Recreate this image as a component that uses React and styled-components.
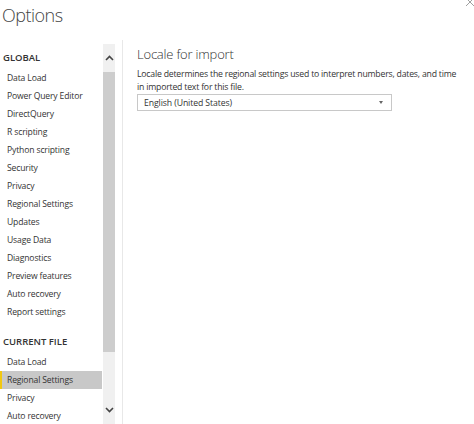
import React from 'react';
import styled, { createGlobalStyle } from 'styled-components';

const GlobalStyle = createGlobalStyle`
  html, body {
    margin: 0;
    padding: 0;
    background: #ffffff;
  }
  body {
    font-family: 'Open Sans', 'Noto Sans', sans-serif;
    color: #333333;
  }
`;

const globalItems = [
    'Data Load',
    'Power Query Editor',
    'DirectQuery',
    'R scripting',
    'Python scripting',
    'Security',
    'Privacy',
    'Regional Settings',
    'Updates',
    'Usage Data',
    'Diagnostics',
    'Preview features',
    'Auto recovery',
    'Report settings',
];

const fileItems = ['Data Load', 'Regional Settings', 'Privacy', 'Auto recovery'];

function Chevron({ up }) {
    return (
        <svg width="9" height="6" viewBox="0 0 9 6">
            <path
                d={up ? 'M1 5 L4.5 1.5 L8 5' : 'M1 1 L4.5 4.5 L8 1'}
                fill="none"
                stroke="#444"
                strokeWidth="1.6"
            />
        </svg>
    );
}

// only the lower half of the close glyph is inside the frame
function CloseMark() {
    return (
        <svg width="10" height="7" viewBox="0 0 10 7">
            <path d="M1 6 L7 0 M3 0 L9 6" stroke="#a0a0a0" strokeWidth="1" fill="none" />
        </svg>
    );
}

function App() {
    return (
        <StyledWindow>
            <GlobalStyle />
            <StyledTitleBar>
                <StyledTitle>Options</StyledTitle>
                <StyledClose>
                    <CloseMark />
                </StyledClose>
            </StyledTitleBar>
            <StyledBody>
                <StyledNav>
                    <StyledSection>GLOBAL</StyledSection>
                    {globalItems.map((item) => (
                        <StyledItem key={`g-${item}`}>{item}</StyledItem>
                    ))}
                    <StyledSection spaced>CURRENT FILE</StyledSection>
                    {fileItems.map((item) => (
                        <StyledItem
                            key={`f-${item}`}
                            current={item === 'Regional Settings'}
                        >
                            {item}
                        </StyledItem>
                    ))}
                </StyledNav>
                <StyledScrollbar>
                    <StyledArrow>
                        <Chevron up />
                    </StyledArrow>
                    <StyledThumb />
                    <StyledTrackRest />
                    <StyledArrow>
                        <Chevron />
                    </StyledArrow>
                </StyledScrollbar>
                <StyledContent>
                    <StyledHeading>Locale for import</StyledHeading>
                    <StyledText>
                        Locale determines the regional settings used to
                        interpret numbers, dates, and time in imported text for
                        this file.
                    </StyledText>
                    <StyledSelect>
                        <span>English (United States)</span>
                        <StyledCaret />
                    </StyledSelect>
                </StyledContent>
            </StyledBody>
        </StyledWindow>
    );
}

export default App;

const StyledWindow = styled.div`
    width: 474px;
    height: 424px;
    overflow: hidden;
    display: flex;
    flex-direction: column;
    background: #ffffff;
`;

const StyledTitleBar = styled.div`
    height: 40px;
    flex-shrink: 0;
    display: flex;
    justify-content: space-between;
    align-items: flex-start;
`;

const StyledTitle = styled.div`
    font-size: 18px;
    font-weight: 300;
    letter-spacing: -0.5px;
    line-height: 24px;
    color: #444444;
    margin: 3px 0 0 2px;
`;

const StyledClose = styled.div`
    display: flex;
    margin-right: -1px;
`;

const StyledBody = styled.div`
    flex: 1;
    min-height: 0;
    display: flex;
`;

const StyledNav = styled.div`
    width: 102px;
    flex-shrink: 0;
    display: flex;
    flex-direction: column;
    padding-top: 10px;
    overflow: hidden;
`;

const StyledSection = styled.div`
    font-size: 9.5px;
    font-weight: 600;
    color: #333333;
    padding-left: 3px;
    height: 15px;
    line-height: 15px;
    margin-top: ${(props) => (props.spaced ? '13px' : '0')};
    margin-bottom: 4px;
`;

const StyledItem = styled.div`
    flex-shrink: 0;
    height: 18px;
    line-height: 18px;
    font-size: 8.6px;
    letter-spacing: -0.15px;
    color: #333333;
    padding-left: 7px;
    white-space: nowrap;
    background: ${(props) => (props.current ? '#c8c8c8' : 'transparent')};
    box-shadow: ${(props) => (props.current ? 'inset 2px 0 0 #f2c811' : 'none')};
`;

const StyledScrollbar = styled.div`
    width: 12px;
    flex-shrink: 0;
    margin: 4px 0 0 1px;
    background: #f0f0f0;
    display: flex;
    flex-direction: column;
`;

const StyledArrow = styled.div`
    height: 28px;
    flex-shrink: 0;
    display: flex;
    align-items: center;
    justify-content: center;
`;

const StyledThumb = styled.div`
    height: 280px;
    flex-shrink: 0;
    background: #cdcdcd;
`;

const StyledTrackRest = styled.div`
    flex: 1;
`;

const StyledContent = styled.div`
    flex: 1;
    margin-left: 7px;
    border-left: 1px solid #e8e8e8;
    padding: 6px 0 0 14px;
`;

const StyledHeading = styled.div`
    font-size: 13px;
    font-weight: 300;
    letter-spacing: -0.2px;
    line-height: 16px;
    color: #333333;
    margin-bottom: 6px;
`;

const StyledText = styled.div`
    font-size: 8.7px;
    letter-spacing: -0.2px;
    line-height: 13px;
    color: #333333;
    width: 324px;
`;

const StyledSelect = styled.div`
    width: 255px;
    height: 17px;
    border: 1px solid #c8c8c8;
    display: flex;
    align-items: center;
    justify-content: space-between;
    padding: 0 8px 0 6px;
    box-sizing: border-box;
    font-size: 8.7px;
    letter-spacing: -0.1px;
    color: #333333;
`;

const StyledCaret = styled.div`
    width: 0;
    height: 0;
    border-left: 2.5px solid transparent;
    border-right: 2.5px solid transparent;
    border-top: 3px solid #666666;
`;
